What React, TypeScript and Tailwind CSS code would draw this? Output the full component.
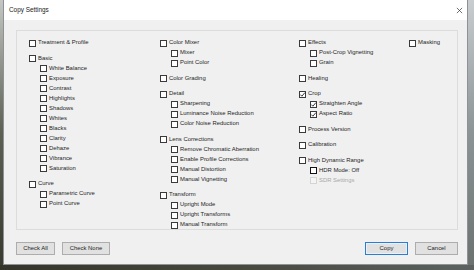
import React from "react";

type Item = { label: string; checked?: boolean; disabled?: boolean; focus?: boolean; children?: Item[] };

const columns: { width: string; groups: Item[] }[] = [
  {
    width: "w-[131px]",
    groups: [
      { label: "Treatment & Profile" },
      {
        label: "Basic",
        children: [
          { label: "White Balance" },
          { label: "Exposure" },
          { label: "Contrast" },
          { label: "Highlights" },
          { label: "Shadows" },
          { label: "Whites" },
          { label: "Blacks" },
          { label: "Clarity" },
          { label: "Dehaze" },
          { label: "Vibrance" },
          { label: "Saturation" },
        ],
      },
      { label: "Curve", children: [{ label: "Parametric Curve" }, { label: "Point Curve" }] },
    ],
  },
  {
    width: "w-[139px]",
    groups: [
      { label: "Color Mixer", children: [{ label: "Mixer" }, { label: "Point Color" }] },
      { label: "Color Grading" },
      {
        label: "Detail",
        children: [
          { label: "Sharpening" },
          { label: "Luminance Noise Reduction" },
          { label: "Color Noise Reduction" },
        ],
      },
      {
        label: "Lens Corrections",
        children: [
          { label: "Remove Chromatic Aberration" },
          { label: "Enable Profile Corrections" },
          { label: "Manual Distortion" },
          { label: "Manual Vignetting" },
        ],
      },
      {
        label: "Transform",
        children: [{ label: "Upright Mode" }, { label: "Upright Transforms" }, { label: "Manual Transform" }],
      },
    ],
  },
  {
    width: "w-[110px]",
    groups: [
      { label: "Effects", children: [{ label: "Post-Crop Vignetting" }, { label: "Grain" }] },
      { label: "Healing" },
      {
        label: "Crop",
        checked: true,
        children: [
          { label: "Straighten Angle", checked: true },
          { label: "Aspect Ratio", checked: true },
        ],
      },
      { label: "Process Version" },
      { label: "Calibration" },
      {
        label: "High Dynamic Range",
        children: [{ label: "HDR Mode: Off", focus: true }, { label: "SDR Settings", disabled: true }],
      },
    ],
  },
  {
    width: "flex-1",
    groups: [{ label: "Masking" }],
  },
];

function Box({ checked, disabled, focus }: { checked?: boolean; disabled?: boolean; focus?: boolean }) {
  const cls = disabled
    ? "border-[#d4d4d4] bg-[#f4f4f4]"
    : focus
    ? "border-[#111111] bg-white"
    : "border-[#3a3a3a] bg-white";
  return (
    <span className={`relative flex h-[7px] w-[7px] flex-none items-center justify-center border ${cls}`}>
      {checked && (
        <svg viewBox="0 0 7 7" className="absolute left-[-1px] top-[-1px] h-[7px] w-[7px]">
          <path d="M1.3 3.6 L2.9 5.2 L5.9 1.6" fill="none" stroke="#222" strokeWidth="0.9" />
        </svg>
      )}
    </span>
  );
}

function Row({ item, indent }: { item: Item; indent?: boolean }) {
  return (
    <div className={`flex h-[10px] items-center gap-[2px] whitespace-nowrap ${indent ? "ml-[11px]" : ""}`}>
      <Box checked={item.checked} disabled={item.disabled} focus={item.focus} />
      <span className={item.disabled ? "text-[#a8a8a8]" : "text-[#1e1e1e]"}>{item.label}</span>
    </div>
  );
}

function Button({ label, primary, w }: { label: string; primary?: boolean; w: string }) {
  return (
    <div
      className={`flex h-[13px] ${w} items-center justify-center border bg-[#e1e1e1] text-[#1e1e1e] ${
        primary ? "border-[#2b7dd0] shadow-[inset_0_0_0_1px_#e8f1fb]" : "border-[#adadad]"
      }`}
    >
      {label}
    </div>
  );
}

export default function App() {
  return (
    <div className="flex h-[270px] w-[474px] flex-col overflow-hidden font-['Liberation_Sans',Arial,sans-serif] text-[5.9px] leading-none">
      <div className="flex h-[265px]">
        <div className="w-[3px] bg-linear-to-b from-[#c4c7c4] via-[#5c6152] to-[#3a3a2f]" />
        <div className="flex w-[465px] flex-col border border-t-0 border-[#8e9296] bg-[#f0f0f0]">
          <div className="flex h-[20px] items-center justify-between bg-white pl-[5px] pr-[4px]">
            <span className="text-[6.4px] text-[#1a1a1a]">Copy Settings</span>
            <svg viewBox="0 0 8 8" className="h-[7px] w-[7px]">
              <path d="M1 1 L7 7 M7 1 L1 7" stroke="#333" strokeWidth="0.8" />
            </svg>
          </div>
          <div className="flex flex-1 flex-col pl-[12px] pr-[9px] pt-[10px]">
            <div className="flex h-[200px] border border-[#dcdcdc] pl-[12px] pt-[7px]">
              {columns.map((col, ci) => (
                <div key={ci} className={`flex ${col.width} flex-col gap-[5.5px]`}>
                  {col.groups.map((g, gi) => (
                    <div key={gi} className="flex flex-col">
                      <Row item={g} />
                      {g.children?.map((c, k) => (
                        <Row key={k} item={c} indent />
                      ))}
                    </div>
                  ))}
                </div>
              ))}
            </div>
            <div className="mt-[12px] flex items-center justify-between">
              <div className="flex gap-[7px]">
                <Button label="Check All" w="w-[39px]" />
                <Button label="Check None" w="w-[48px]" />
              </div>
              <div className="flex gap-[7px]">
                <Button label="Copy" primary w="w-[43px]" />
                <Button label="Cancel" w="w-[43px]" />
              </div>
            </div>
          </div>
        </div>
        <div className="flex-1 bg-linear-to-b from-[#c9cdd0] via-[#8c9496] to-[#6c7270]" />
      </div>
      <div className="h-[5px] bg-linear-to-r from-[#34342b] via-[#47483e] to-[#5d6260]" />
    </div>
  );
}
